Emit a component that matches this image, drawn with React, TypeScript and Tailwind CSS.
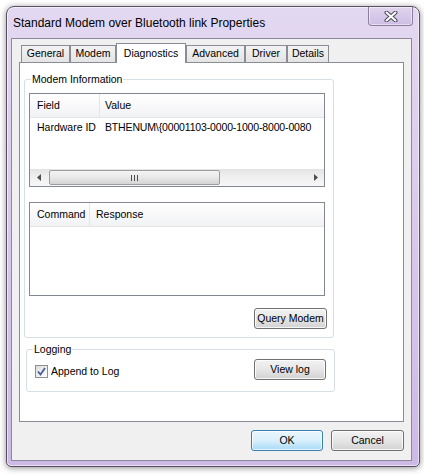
import type { ReactNode } from 'react';

const TABS = [
  { label: 'General', w: 'w-[49px]' },
  { label: 'Modem', w: 'w-[46px]' },
  { label: 'Diagnostics', w: 'w-[70px]', active: true },
  { label: 'Advanced', w: 'w-[59px]' },
  { label: 'Driver', w: 'w-[42px]' },
  { label: 'Details', w: 'w-[42px]' },
];

function CloseGlyph() {
  return (
    <svg width="14" height="11" viewBox="0 0 14 11">
      <path d="M2.5 1.5 L11.5 9.5 M11.5 1.5 L2.5 9.5" stroke="#4b4658" strokeWidth="4" strokeLinecap="round" />
      <path d="M2.5 1.5 L11.5 9.5 M11.5 1.5 L2.5 9.5" stroke="#ffffff" strokeWidth="2" strokeLinecap="round" />
    </svg>
  );
}

function Button({ children, w, primary }: { children: ReactNode; w: string; primary?: boolean }) {
  return (
    <button
      className={
        primary
          ? `${w} h-[21px] rounded-[3px] border border-[#3c7fb1] bg-linear-to-b from-[#eaf6fd] via-[#d9f0fc] to-[#a7d9f5] shadow-[inset_0_0_0_1px_rgba(255,255,255,0.7)] text-black`
          : `${w} h-[21px] rounded-[3px] border border-[#707070] bg-linear-to-b from-[#f2f2f2] via-[#e6e6e6] to-[#d2d2d2] shadow-[inset_0_0_0_1px_rgba(255,255,255,0.8)] text-black`
      }
    >
      {children}
    </button>
  );
}

function GroupBox({ title, className, children }: { title: string; className: string; children: ReactNode }) {
  return (
    <div className={`relative rounded-[3px] border border-[#d5dfe5] ${className}`}>
      <span className="absolute left-[6px] top-[-7px] bg-white px-[1px] leading-[13px]">{title}</span>
      {children}
    </div>
  );
}

function ListHeader({ cols }: { cols: { label: string; w: string; pad: string }[] }) {
  return (
    <div className="flex h-[24px] shrink-0 border-b border-[#e5e5e5] bg-linear-to-b from-white to-[#f1f2f4]">
      {cols.map((c, i) => (
        <div
          key={c.label}
          className={`${c.w} ${c.pad} flex items-center pt-[1px] ${i === 0 ? 'border-r border-[#e3e5e8]' : 'flex-1'}`}
        >
          {c.label}
        </div>
      ))}
    </div>
  );
}

function Arrow({ dir }: { dir: 'left' | 'right' }) {
  return (
    <svg width="4" height="7" viewBox="0 0 4 7">
      {dir === 'left' ? <path d="M4 0 L0 3.5 L4 7 Z" fill="#4d4d4d" /> : <path d="M0 0 L4 3.5 L0 7 Z" fill="#4d4d4d" />}
    </svg>
  );
}

function HScrollBar() {
  return (
    <div className="flex h-[17px] shrink-0 items-stretch bg-linear-to-b from-[#e3e3e3] via-[#f0f0f0] to-[#f7f7f7]">
      <div className="flex w-[17px] items-center justify-center">
        <Arrow dir="left" />
      </div>
      <div className="flex-1 py-[1px] pl-[2px]">
        <div className="flex h-full w-[171px] items-center justify-center gap-[2px] rounded-[2px] border border-[#9d9d9d] bg-linear-to-b from-[#f4f4f4] via-[#e8e8e8] to-[#d4d4d4]">
          <span className="h-[6px] w-[1px] bg-[#4d4d4d]" />
          <span className="h-[6px] w-[1px] bg-[#4d4d4d]" />
          <span className="h-[6px] w-[1px] bg-[#4d4d4d]" />
        </div>
      </div>
      <div className="flex w-[17px] items-center justify-center">
        <Arrow dir="right" />
      </div>
    </div>
  );
}

export default function App() {
  return (
    <div className="h-[475px] w-[424px] bg-white pl-[6px] pt-[6px] font-['Segoe_UI','Liberation_Sans',Arial,sans-serif] text-[10.5px] text-black">
      <div className="flex h-[461px] w-[414px] flex-col rounded-t-[8px] rounded-b-[5px] border border-[#56505f] bg-linear-to-b from-[#e3d8f1] to-[#cdb9e6] shadow-[inset_0_0_0_1px_rgba(255,255,255,0.55),0_1px_6px_rgba(0,0,0,0.45)]">
        {/* caption */}
        <div className="flex h-[31px] shrink-0 items-start">
          <div className="flex-1 pl-[6px] pt-[9px] text-[12px] leading-[14px]">
            Standard Modem over Bluetooth link Properties
          </div>
          <div className="mr-[6px] flex h-[19px] w-[45px] items-center justify-center rounded-b-[4px] border border-t-0 border-[#8b7f9e] bg-linear-to-b from-[#e0d5ee] to-[#cdbde4] shadow-[inset_0_0_0_1px_rgba(255,255,255,0.5)]">
            <CloseGlyph />
          </div>
        </div>

        {/* client area */}
        <div className="ml-[4px] h-[423px] w-[401px] border border-[#8e889a] bg-[#f0f0f0]">
          <div className="ml-[7px] mt-[4px] w-[385px]">
            <div className="relative z-10 flex h-[19px] items-end pl-[2px]">
              {TABS.map((t) =>
                t.active ? (
                  <div
                    key={t.label}
                    className={`${t.w} mb-[-1px] flex h-[20px] items-start justify-center border border-b-0 border-[#898c95] bg-white pt-[2px]`}
                  >
                    {t.label}
                  </div>
                ) : (
                  <div
                    key={t.label}
                    className={`${t.w} flex h-[17px] items-center justify-center border border-b-0 border-[#898c95] bg-linear-to-b from-[#f3f3f3] to-[#e4e4e4]`}
                  >
                    {t.label}
                  </div>
                )
              )}
            </div>

            {/* tab page */}
            <div className="h-[360px] w-[385px] border border-[#898c95] bg-white">
              <GroupBox title="Modem Information" className="ml-[4px] mt-[16px] h-[259px] w-[310px]">
                <div className="ml-[4px] mt-[13px] flex h-[94px] w-[296px] flex-col border border-[#828790]">
                  <ListHeader
                    cols={[
                      { label: 'Field', w: 'w-[70px]', pad: 'pl-[7px]' },
                      { label: 'Value', w: '', pad: 'pl-[5px]' },
                    ]}
                  />
                  <div className="flex h-[19px] items-center overflow-hidden whitespace-nowrap pt-[1px]">
                    <span className="w-[70px] shrink-0 pl-[7px]">Hardware ID</span>
                    <span className="pl-[5px] tracking-[-0.15px]">BTHENUM\{'{'}00001103-0000-1000-8000-0080</span>
                  </div>
                  <div className="flex-1" />
                  <HScrollBar />
                </div>

                <div className="ml-[4px] mt-[15px] flex h-[94px] w-[296px] flex-col border border-[#828790]">
                  <ListHeader
                    cols={[
                      { label: 'Command', w: 'w-[60px]', pad: 'pl-[7px]' },
                      { label: 'Response', w: '', pad: 'pl-[6px]' },
                    ]}
                  />
                </div>

                <div className="mt-[12px] flex justify-end pr-[6px]">
                  <Button w="w-[73px]">Query Modem</Button>
                </div>
              </GroupBox>

              <GroupBox title="Logging" className="ml-[6px] mt-[11px] h-[43px] w-[309px]">
                <div className="flex items-center justify-between pl-[8px] pr-[8px] pt-[9px]">
                  <label className="flex items-center gap-[3px] pt-[4px]">
                    <span className="flex h-[13px] w-[13px] items-center justify-center border border-[#8e8f8f] bg-linear-to-br from-[#dcdcdc] to-white">
                      <svg width="9" height="9" viewBox="0 0 9 9">
                        <path d="M1 4.5 L3.5 7.5 L8 1" stroke="#4a5f97" strokeWidth="1.8" fill="none" />
                      </svg>
                    </span>
                    Append to Log
                  </label>
                  <Button w="w-[72px]">View log</Button>
                </div>
              </GroupBox>
            </div>
          </div>

          <div className="mt-[8px] flex justify-end gap-[8px] pr-[7px]">
            <Button w="w-[72px]" primary>
              OK
            </Button>
            <Button w="w-[73px]">Cancel</Button>
          </div>
        </div>
      </div>
    </div>
  );
}
